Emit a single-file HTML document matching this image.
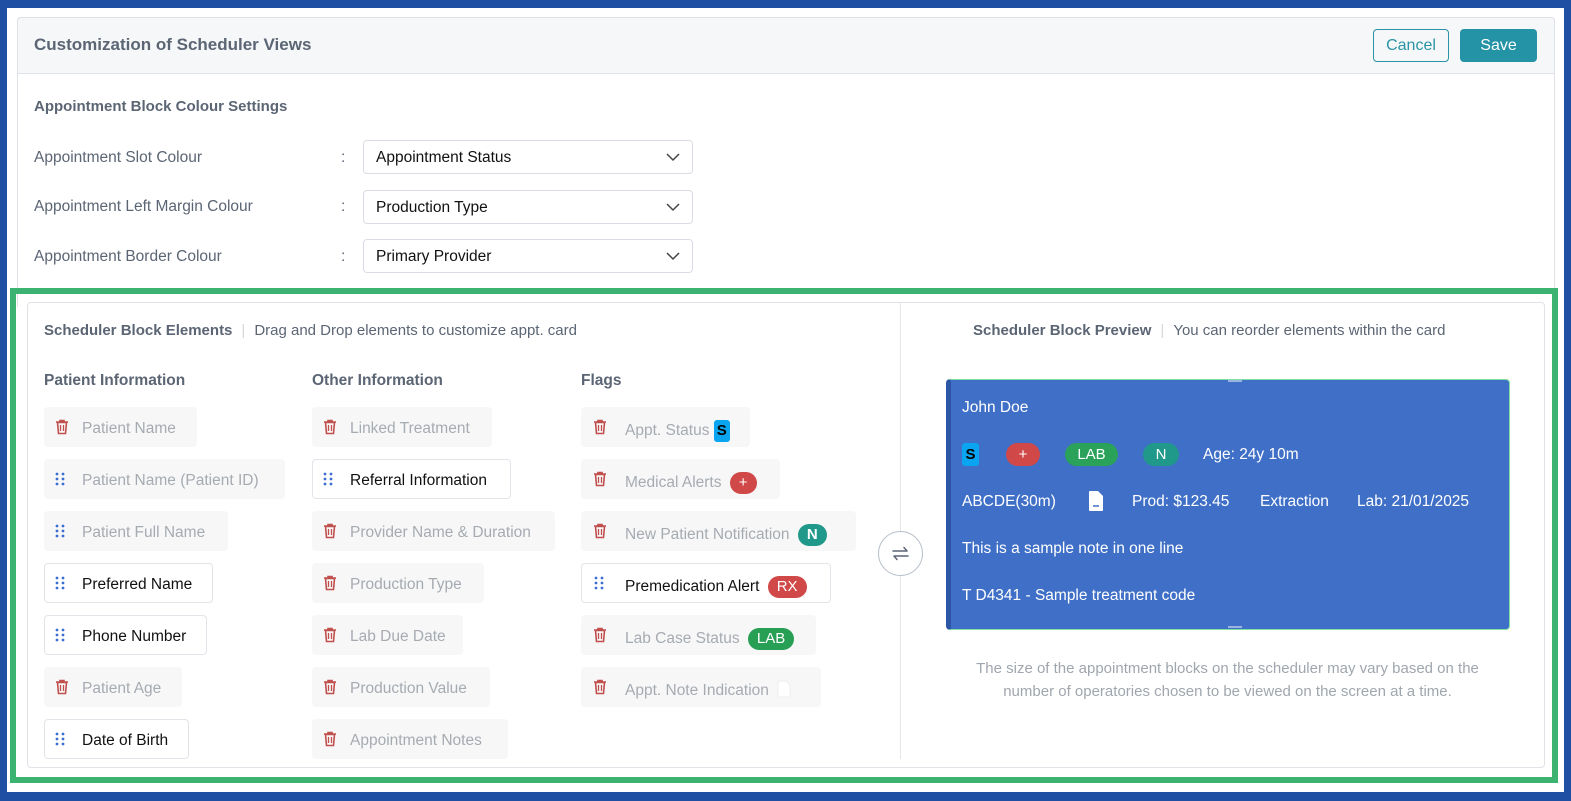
<!DOCTYPE html>
<html><head><meta charset="utf-8"><style>
*{box-sizing:border-box;margin:0;padding:0}
body{width:1571px;height:801px;background:#1f4fa3;font-family:"Liberation Sans",sans-serif;position:relative;overflow:hidden}
.a{position:absolute;white-space:nowrap}
#white{left:7px;top:8px;width:1557px;height:784px;background:#fff}
#card{left:17px;top:17px;width:1538px;height:290px;border:1px solid #dfe2e7;border-bottom:none;border-radius:4px 4px 0 0;background:#fff}
#hdr{left:17px;top:17px;width:1538px;height:57px;background:#f6f7f9;border:1px solid #dfe2e7;border-radius:4px 4px 0 0}
.lbl{font-size:15.5px;color:#5b6574}
.sel{width:330px;height:34px;border:1px solid #d9dde3;border-radius:4px;font-size:15.5px;color:#111;padding:8px 12px;background:#fff}
.sel svg{position:absolute;right:12px;top:11px}
#green{left:10px;top:288px;width:1548px;height:495px;border:6px solid #3cb371}
#inner{left:27px;top:302px;width:1518px;height:466px;border:1px solid #dfe2e7;border-radius:4px;background:#fff}
.it{height:40px;border-radius:4px;font-size:15.5px;padding:13px 0 0 38px;background:#f7f7f7;color:#a6abb2}
.it.on{background:#fff;border:1px solid #e1e4e8;color:#111;padding-top:12px;padding-left:37px}
.it .ic{position:absolute;left:11px;top:12px}
.it.on .ic{left:10px;top:11px}
.f{padding-left:44px}.f .ic{left:12px}.f.on{padding-left:43px}.f.on .ic{left:12px}
.b{display:inline-block;border-radius:11px;color:#fff;font-size:15px;padding:2px 9px;margin-left:4px;line-height:18px;vertical-align:0}
.h3{font-size:15.5px;font-weight:bold;color:#5b6574}
.pv{color:#fff;font-size:15.5px}
</style></head><body>
<div class="a" id="white"></div>
<div class="a" id="card"></div>
<div class="a" id="hdr"></div>
<div class="a" style="left:34px;top:35px;font-size:17px;font-weight:bold;color:#5b6574">Customization of Scheduler Views</div>
<div class="a" style="left:1373px;top:29px;width:76px;height:33px;border:1px solid #2a93a6;border-radius:4px;color:#2a93a6;font-size:16px;text-align:center;line-height:31px">Cancel</div>
<div class="a" style="left:1460px;top:29px;width:77px;height:33px;background:#2593a6;border-radius:4px;color:#fff;font-size:16px;text-align:center;line-height:33px">Save</div>
<div class="a" style="left:34px;top:98px;font-size:15px;font-weight:bold;color:#5b6574">Appointment Block Colour Settings</div>
<div class="a lbl" style="left:34px;top:149px">Appointment Slot Colour</div>
<div class="a lbl" style="left:34px;top:198px">Appointment Left Margin Colour</div>
<div class="a lbl" style="left:34px;top:248px">Appointment Border Colour</div>
<div class="a lbl" style="left:341px;top:149px">:</div>
<div class="a lbl" style="left:341px;top:198px">:</div>
<div class="a lbl" style="left:341px;top:248px">:</div>
<div class="a sel" style="left:363px;top:140px">Appointment Status<svg width="14" height="10"><path d="M1 2l6 6 6-6" fill="none" stroke="#444" stroke-width="1.5"/></svg></div>
<div class="a sel" style="left:363px;top:190px">Production Type<svg width="14" height="10"><path d="M1 2l6 6 6-6" fill="none" stroke="#444" stroke-width="1.5"/></svg></div>
<div class="a sel" style="left:363px;top:239px">Primary Provider<svg width="14" height="10"><path d="M1 2l6 6 6-6" fill="none" stroke="#444" stroke-width="1.5"/></svg></div>

<div class="a" id="green"></div>
<div class="a" id="inner"></div>
<div class="a" style="left:900px;top:303px;width:1px;height:456px;background:#e3e6ea"></div>
<div class="a" style="left:44px;top:322px;font-size:15px"><span class="h3" style="font-size:15px">Scheduler Block Elements</span><span style="color:#d5d8dc;margin:0 9px">|</span><span style="color:#5b6574">Drag and Drop elements to customize appt. card</span></div>
<div class="a" style="left:973px;top:322px;font-size:15px"><span class="h3" style="font-size:15px">Scheduler Block Preview</span><span style="color:#d5d8dc;margin:0 9px">|</span><span style="color:#5b6574">You can reorder elements within the card</span></div>
<div class="a h3" style="left:44px;top:372px">Patient Information</div>
<div class="a h3" style="left:312px;top:372px">Other Information</div>
<div class="a h3" style="left:581px;top:372px">Flags</div>

<svg width="0" height="0" style="position:absolute"><defs>
<symbol id="tr" viewBox="0 0 14 16"><path d="M1 3h12M5 3V1.5h4V3M2.5 3.5l1 11h7l1-11z" fill="none" stroke="#c0504d" stroke-width="1.6"/><path d="M5.5 6v6M8.5 6v6" stroke="#c0504d" stroke-width="1.3"/></symbol>
<symbol id="dg" viewBox="0 0 10 16"><g fill="#3a6fd1"><circle cx="2" cy="3" r="1.4"/><circle cx="8" cy="3" r="1.4"/><circle cx="2" cy="8" r="1.4"/><circle cx="8" cy="8" r="1.4"/><circle cx="2" cy="13" r="1.4"/><circle cx="8" cy="13" r="1.4"/></g></symbol>
</defs></svg>

<!-- Patient info -->
<div class="a it" style="left:44px;top:407px;width:153px"><svg class="ic" width="14" height="16"><use href="#tr"/></svg>Patient Name</div>
<div class="a it" style="left:44px;top:459px;width:241px"><svg class="ic" width="10" height="16"><use href="#dg"/></svg>Patient Name (Patient ID)</div>
<div class="a it" style="left:44px;top:511px;width:184px"><svg class="ic" width="10" height="16"><use href="#dg"/></svg>Patient Full Name</div>
<div class="a it on" style="left:44px;top:563px;width:169px"><svg class="ic" width="10" height="16"><use href="#dg"/></svg>Preferred Name</div>
<div class="a it on" style="left:44px;top:615px;width:163px"><svg class="ic" width="10" height="16"><use href="#dg"/></svg>Phone Number</div>
<div class="a it" style="left:44px;top:667px;width:138px"><svg class="ic" width="14" height="16"><use href="#tr"/></svg>Patient Age</div>
<div class="a it on" style="left:44px;top:719px;width:145px"><svg class="ic" width="10" height="16"><use href="#dg"/></svg>Date of Birth</div>
<!-- Other -->
<div class="a it" style="left:312px;top:407px;width:180px"><svg class="ic" width="14" height="16"><use href="#tr"/></svg>Linked Treatment</div>
<div class="a it on" style="left:312px;top:459px;width:199px"><svg class="ic" width="10" height="16"><use href="#dg"/></svg>Referral Information</div>
<div class="a it" style="left:312px;top:511px;width:243px"><svg class="ic" width="14" height="16"><use href="#tr"/></svg>Provider Name &amp; Duration</div>
<div class="a it" style="left:312px;top:563px;width:172px"><svg class="ic" width="14" height="16"><use href="#tr"/></svg>Production Type</div>
<div class="a it" style="left:312px;top:615px;width:151px"><svg class="ic" width="14" height="16"><use href="#tr"/></svg>Lab Due Date</div>
<div class="a it" style="left:312px;top:667px;width:178px"><svg class="ic" width="14" height="16"><use href="#tr"/></svg>Production Value</div>
<div class="a it" style="left:312px;top:719px;width:196px"><svg class="ic" width="14" height="16"><use href="#tr"/></svg>Appointment Notes</div>
<!-- Flags -->
<div class="a it f" style="left:581px;top:407px;width:169px"><svg class="ic" width="14" height="16"><use href="#tr"/></svg>Appt. Status <span class="b" style="background:#0aa5f0;color:#000;border-radius:3px;padding:2px 3px;font-weight:bold;margin-left:0">S</span></div>
<div class="a it f" style="left:581px;top:459px;width:199px"><svg class="ic" width="14" height="16"><use href="#tr"/></svg>Medical Alerts <span class="b" style="background:#d04848">+</span></div>
<div class="a it f" style="left:581px;top:511px;width:275px"><svg class="ic" width="14" height="16"><use href="#tr"/></svg>New Patient Notification <span class="b" style="background:#20998a;font-weight:bold">N</span></div>
<div class="a it on f" style="left:581px;top:563px;width:250px"><svg class="ic" width="10" height="16"><use href="#dg"/></svg>Premedication Alert <span class="b" style="background:#d04848">RX</span></div>
<div class="a it f" style="left:581px;top:615px;width:235px"><svg class="ic" width="14" height="16"><use href="#tr"/></svg>Lab Case Status <span class="b" style="background:#27a055">LAB</span></div>
<div class="a it f" style="left:581px;top:667px;width:240px"><svg class="ic" width="14" height="16"><use href="#tr"/></svg>Appt. Note Indication <svg width="14" height="18" style="vertical-align:-3px;margin-left:4px"><path d="M1 1h8l4 4v12H1z" fill="#fff" stroke="#eee"/></svg></div>

<div class="a" style="left:878px;top:531px;width:45px;height:45px;border:1px solid #b8c0ca;border-radius:50%;background:#fff"><svg width="43" height="43"><path d="M14 19h14l-3-3.5M29 24H15l3 3.5" fill="none" stroke="#5b6574" stroke-width="1.5" stroke-linecap="round" stroke-linejoin="round"/></svg></div>

<!-- preview -->
<div class="a" style="left:946px;top:379px;width:564px;height:251px;background:#3f6fc6;border:1px solid #7fe0a0;border-left:5px solid #2b56a6;border-radius:4px"></div>
<div class="a" style="left:1228px;top:380px;width:14px;height:2px;background:#9bb3e0"></div>
<div class="a" style="left:1228px;top:626px;width:14px;height:2px;background:#9bb3e0"></div>
<div class="a pv" style="left:962px;top:399px">John Doe</div>
<div class="a" style="left:962px;top:443px;width:17px;height:23px;background:#0aa5f0;border-radius:3px;color:#000;font-weight:bold;font-size:15px;text-align:center;line-height:23px">S</div>
<div class="a" style="left:1006px;top:443px;width:34px;height:23px;background:#d04848;border-radius:12px;color:#fff;font-size:15px;text-align:center;line-height:23px">+</div>
<div class="a" style="left:1065px;top:443px;width:53px;height:23px;background:#2aa25a;border-radius:12px;color:#fff;font-size:15px;text-align:center;line-height:23px">LAB</div>
<div class="a" style="left:1143px;top:443px;width:36px;height:23px;background:#20998a;border-radius:12px;color:#fff;font-size:15px;text-align:center;line-height:23px">N</div>
<div class="a pv" style="left:1203px;top:446px">Age: 24y 10m</div>
<div class="a pv" style="left:962px;top:493px">ABCDE(30m)</div>
<svg class="a" style="left:1088px;top:490px" width="16" height="22"><path d="M1 2a1 1 0 0 1 1-1h8l5 5v14a1 1 0 0 1-1 1H2a1 1 0 0 1-1-1z" fill="#fff"/><path d="M5 16h6" stroke="#3f6fc6" stroke-width="1.5"/></svg>
<div class="a pv" style="left:1132px;top:493px">Prod: $123.45</div>
<div class="a pv" style="left:1260px;top:493px">Extraction</div>
<div class="a pv" style="left:1357px;top:493px">Lab: 21/01/2025</div>
<div class="a pv" style="left:962px;top:540px">This is a sample note in one line</div>
<div class="a pv" style="left:962px;top:587px">T D4341 - Sample treatment code</div>
<div class="a" style="left:955px;top:657px;width:545px;text-align:center;color:#a0a6ae;font-size:15px;line-height:23px;white-space:normal">The size of the appointment blocks on the scheduler may vary based on the number of operatories chosen to be viewed on the screen at a time.</div>
</body></html>
